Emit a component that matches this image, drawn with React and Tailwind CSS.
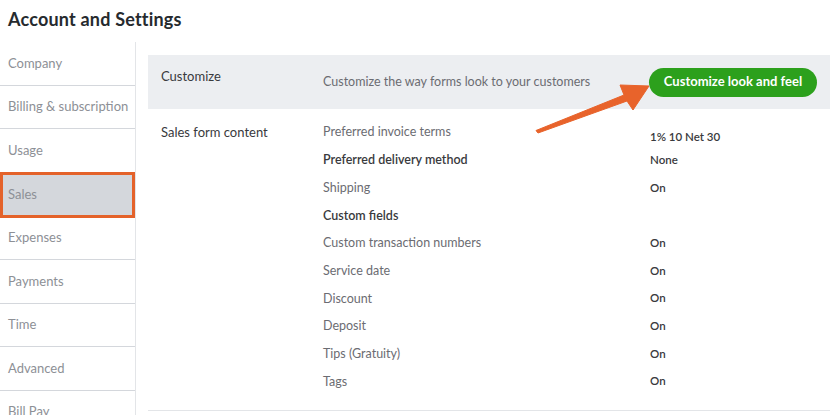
import React from 'react'

const navItems = ['Company', 'Billing & subscription', 'Usage', 'Sales', 'Expenses', 'Payments', 'Time', 'Advanced', 'Bill Pay']

const rows = [
  { label: 'Preferred invoice terms', value: '1% 10 Net 30', first: true },
  { label: 'Preferred delivery method', value: 'None', bold: true },
  { label: 'Shipping', value: 'On' },
  { label: 'Custom fields', value: '', bold: true },
  { label: 'Custom transaction numbers', value: 'On' },
  { label: 'Service date', value: 'On' },
  { label: 'Discount', value: 'On' },
  { label: 'Deposit', value: 'On' },
  { label: 'Tips (Gratuity)', value: 'On' },
  { label: 'Tags', value: 'On' },
]

export default function App() {
  return (
    <div className="relative w-[830px] h-[415px] overflow-hidden bg-white font-['Lato',sans-serif]">
      <div className="h-[42px] px-2 pt-[6px]">
        <h1 className="text-[18px] font-bold text-[#262a2e] tracking-[0.2px]">Account and Settings</h1>
      </div>

      <div className="flex">
        {/* sidebar */}
        <div className="w-[136px] shrink-0 border-r border-[#e3e5e8]">
          {navItems.map((item) =>
            item === 'Sales' ? (
              <div
                key={item}
                className="h-[46px] -my-[1px] relative flex items-center pl-[5px] bg-[#d4d7dc] border-[3px] border-[#e4622a] text-[13px] text-[#8d9096]"
              >
                {item}
              </div>
            ) : (
              <div
                key={item}
                className="h-[43.5px] flex items-center pl-2 border-b border-[#d4d7dc] text-[13px] text-[#8d9096]"
              >
                {item}
              </div>
            )
          )}
        </div>

        {/* main */}
        <div className="flex-1 pl-3 pt-[13px]">
          <div className="h-[54px] flex bg-[#eceef1] px-[13px]">
            <div className="w-[162px] pt-[12px] text-[13px] text-[#393a3d]">Customize</div>
            <div className="flex-1 flex items-center text-[12.5px] text-[#6b6c72]">Customize the way forms look to your customers</div>
            <div className="flex items-center">
              <button className="w-[168px] h-[29px] rounded-full bg-[#2ca01c] text-white text-[13px] font-bold">
                Customize look and feel
              </button>
            </div>
          </div>

          <div className="flex px-[13px] pt-[10px] pb-[14px] border-b border-[#e3e5e8]">
            <div className="w-[162px] h-[27.7px] flex items-center text-[13px] text-[#393a3d]">Sales form content</div>
            <div className="flex-1">
              {rows.map((r) => (
                <div key={r.label} className="h-[27.7px] flex items-center">
                  <div className={`w-[327px] text-[12.5px] ${r.bold ? 'font-semibold text-[#393a3d]' : 'text-[#6b6c72]'}`}>
                    {r.label}
                  </div>
                  <div className={`text-[11.5px] font-semibold text-[#393a3d] ${r.first ? 'mt-2 font-medium' : '-mt-[2px]'}`}>
                    {r.value}
                  </div>
                </div>
              ))}
            </div>
          </div>
        </div>
      </div>

      {/* annotation arrow */}
      <svg className="absolute left-0 top-0 pointer-events-none" width="830" height="415" viewBox="0 0 830 415">
        <polygon
          points="536,130.5 624,95 620,85 649,86 633,110 627,101 538,133"
          fill="#e8632b"
          stroke="#e8632b"
          strokeWidth="1"
          strokeLinejoin="round"
        />
      </svg>
    </div>
  )
}
